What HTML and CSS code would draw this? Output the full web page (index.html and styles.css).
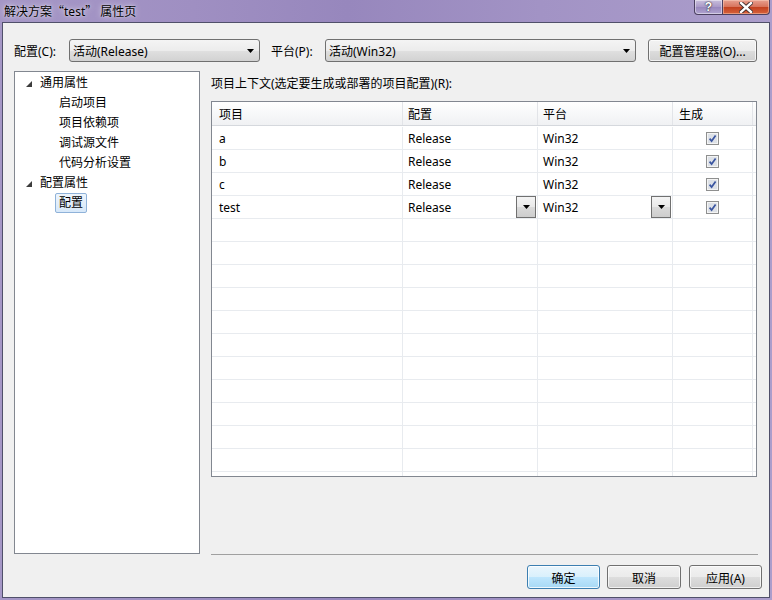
FILE: index.html
```html
<!DOCTYPE html>
<html lang="zh-CN">
<head>
    <meta charset="UTF-8">
    <title>解决方案“test” 属性页</title>
    <link rel="stylesheet" href="styles.css">
</head>
<body>
    <div class="window">
        <div class="titlebar">
            <span class="title">解决方案<span class="cjk-quote">“</span>test<span class="cjk-quote">”</span> 属性页</span>
            <div class="caption-buttons">
                <div class="cap-btn help">?</div>
                <div class="cap-btn close">
                    <svg width="14" height="11" viewBox="0 0 14 11">
                        <path d="M2 1 L12 10 M12 1 L2 10" stroke="#3a2a2a" stroke-width="4.2" stroke-linecap="square"/>
                        <path d="M2 1 L12 10 M12 1 L2 10" stroke="#fff" stroke-width="2.4" stroke-linecap="square"/>
                    </svg>
                </div>
            </div>
        </div>

        <div class="client">
            <div class="toolbar">
                <span class="tb-label">配置(C):</span>
                <div class="combo combo-config">
                    <span>活动(Release)</span>
                    <svg class="arrow" width="7" height="4" viewBox="0 0 7 4"><path d="M0 0 H7 L3.5 4 Z" fill="#000"/></svg>
                </div>
                <span class="tb-label tb-label-platform">平台(P):</span>
                <div class="combo combo-platform">
                    <span>活动(Win32)</span>
                    <svg class="arrow" width="7" height="4" viewBox="0 0 7 4"><path d="M0 0 H7 L3.5 4 Z" fill="#000"/></svg>
                </div>
                <button class="btn btn-manager">配置管理器(O)...</button>
            </div>

            <div class="main">
                <div class="tree">
                    <div class="tree-row top">
                        <span class="toggle"><svg width="7" height="7" viewBox="0 0 7 7"><path d="M6 0 V6 H0 Z" fill="#3c3c3c"/></svg></span>
                        <span class="tree-label">通用属性</span>
                    </div>
                    <div class="tree-row child"><span class="tree-label">启动项目</span></div>
                    <div class="tree-row child"><span class="tree-label">项目依赖项</span></div>
                    <div class="tree-row child"><span class="tree-label">调试源文件</span></div>
                    <div class="tree-row child"><span class="tree-label">代码分析设置</span></div>
                    <div class="tree-row top">
                        <span class="toggle"><svg width="7" height="7" viewBox="0 0 7 7"><path d="M6 0 V6 H0 Z" fill="#3c3c3c"/></svg></span>
                        <span class="tree-label">配置属性</span>
                    </div>
                    <div class="tree-row child"><span class="tree-label selected">配置</span></div>
                </div>

                <div class="pane">
                    <div class="pane-label">项目上下文(选定要生成或部署的项目配置)(R):</div>
                    <div class="grid">
                        <div class="grid-head">
                            <div class="cell c1">项目</div>
                            <div class="cell c2">配置</div>
                            <div class="cell c3">平台</div>
                            <div class="cell c4">生成</div>
                        </div>
                        <div class="grid-body" id="grid-body"></div>
                    </div>
                    <div class="separator"></div>
                </div>
            </div>

            <div class="buttons">
                <button class="btn btn-default">确定</button>
                <button class="btn btn-cancel">取消</button>
                <button class="btn btn-apply">应用(A)</button>
            </div>
        </div>
    </div>

    <script>
        const projects = [
            { name: 'a', config: 'Release', platform: 'Win32' },
            { name: 'b', config: 'Release', platform: 'Win32' },
            { name: 'c', config: 'Release', platform: 'Win32' },
            { name: 'test', config: 'Release', platform: 'Win32', current: true }
        ];
        const emptyRows = 12;

        const checkSvg = '<svg class="check" width="13" height="13" viewBox="0 0 13 13">' +
            '<rect x="0.5" y="0.5" width="12" height="12" fill="#f4f4f4" stroke="#8e8f8f"/>' +
            '<rect x="2" y="2" width="9" height="9" fill="#dde1e7"/>' +
            '<path d="M3.6 6.6 L5.6 9 L9.6 3.4" fill="none" stroke="#3a55a0" stroke-width="1.7"/></svg>';
        const dropBtn = '<span class="cell-drop"><svg width="7" height="4" viewBox="0 0 7 4"><path d="M0 0 H7 L3.5 4 Z" fill="#000"/></svg></span>';

        const body = document.getElementById('grid-body');
        let html = '';
        projects.forEach(p => {
            html += '<div class="grid-row">' +
                '<div class="cell c1"><span class="txt">' + p.name + '</span></div>' +
                '<div class="cell c2"><span class="txt">' + p.config + '</span>' + (p.current ? dropBtn : '') + '</div>' +
                '<div class="cell c3"><span class="txt">' + p.platform + '</span>' + (p.current ? dropBtn : '') + '</div>' +
                '<div class="cell c4">' + checkSvg + '</div>' +
                '</div>';
        });
        for (let i = 0; i < emptyRows; i++) {
            html += '<div class="grid-row"><div class="cell c1"></div><div class="cell c2"></div><div class="cell c3"></div><div class="cell c4"></div></div>';
        }
        body.innerHTML = html;
    </script>
</body>
</html>
```

FILE: styles.css
```css
body {
    margin: 0;
    font-family: "Noto Sans", "Noto Sans CJK SC", sans-serif;
    font-size: 12px;
    color: #000;
}

.window {
    width: 772px;
    height: 600px;
    display: flex;
    flex-direction: column;
    background: linear-gradient(90deg, #a597c6 0%, #9f8fc2 25%, #9787bd 45%, #a293c5 70%, #ab9dcb 100%);
    overflow: hidden;
}

/* title bar */
.titlebar {
    height: 22px;
    display: flex;
    justify-content: space-between;
    align-items: flex-start;
    flex-shrink: 0;
}

.title {
    padding: 3px 0 0 4px;
    line-height: 16px;
    text-shadow: 0 0 6px rgba(255, 255, 255, 0.8), 0 0 2px rgba(255, 255, 255, 0.6);
}

.cjk-quote {
    font-family: "Noto Sans CJK SC", sans-serif;
}

.caption-buttons {
    display: flex;
    margin-right: 2px;
}

.cap-btn {
    height: 15px;
    border: 1px solid #4b4060;
    border-top: none;
    display: flex;
    align-items: center;
    justify-content: center;
    box-sizing: border-box;
}

.help {
    width: 29px;
    border-radius: 0 0 0 4px;
    background: linear-gradient(#c9bfdc, #a999c8 50%, #9887bd 51%, #b0a3cf);
    color: #fff;
    font-family: "Liberation Sans", sans-serif;
    font-weight: bold;
    font-size: 12px;
    line-height: 14px;
    text-shadow: 0 0 1px #222, 0 0 2px #333;
    box-shadow: inset 0 0 0 1px rgba(255, 255, 255, 0.45);
}

.close {
    width: 47px;
    border-left: none;
    border-radius: 0 0 4px 0;
    background: linear-gradient(#e7a090, #d7725a 50%, #c2401f 51%, #d6623c);
    box-shadow: inset 0 0 0 1px rgba(255, 220, 200, 0.45);
}

/* client area */
.client {
    flex: 1;
    margin: 0 2px 2px 2px;
    border: 1px solid #50506a;
    background: #f0f0f0;
    padding: 16px 7px 8px 11px;
    display: flex;
    flex-direction: column;
}

.toolbar {
    display: flex;
    align-items: center;
    height: 23px;
}

.tb-label {
    width: 55px;
    padding-top: 1px;
}

.tb-label-platform {
    margin-left: 11px;
    width: 54px;
}

.combo {
    height: 23px;
    box-sizing: border-box;
    border: 1px solid #707070;
    border-radius: 3px;
    background: linear-gradient(#f4f4f4, #ececec 50%, #e0e0e0 51%, #d2d2d2);
    display: flex;
    align-items: center;
    justify-content: space-between;
    padding: 1px 5px 0 3px;
}

.combo-config {
    width: 191px;
}

.combo-platform {
    width: 311px;
}

.btn {
    font-family: inherit;
    font-size: 12px;
    color: #000;
    height: 24px;
    box-sizing: border-box;
    border: 1px solid #707070;
    border-radius: 3px;
    background: linear-gradient(#f2f2f2, #ebebeb 50%, #dddddd 51%, #cfcfcf);
    box-shadow: inset 0 0 0 1px rgba(255, 255, 255, 0.7);
    padding: 1px 0 0 0;
}

.btn-manager {
    margin-left: 12px;
    width: 109px;
    height: 23px;
}

/* main area */
.main {
    display: flex;
    height: 484px;
    margin-top: 9px;
}

.tree {
    width: 186px;
    height: 483px;
    box-sizing: border-box;
    border: 1px solid #828790;
    background: #fff;
    flex-shrink: 0;
    padding-top: 1px;
}

.tree-row {
    height: 20px;
    display: flex;
    align-items: center;
}

.tree-row.child {
    padding-left: 40px;
}

.toggle {
    width: 10px;
    margin-left: 11px;
    display: flex;
    padding-top: 3px;
}

.tree-label {
    display: inline-block;
    height: 18px;
    line-height: 18px;
    padding: 0 3px;
    border: 1px solid transparent;
    border-radius: 2px;
}

.tree-label.selected {
    border-color: #8fb2d9;
    background: linear-gradient(#eef5fc, #d7e8f9);
}

.pane {
    margin-left: 11px;
    width: 547px;
    display: flex;
    flex-direction: column;
}

.pane-label {
    height: 30px;
    box-sizing: border-box;
    padding-top: 5px;
    line-height: 16px;
}

.grid {
    width: 546px;
    height: 376px;
    box-sizing: border-box;
    border: 1px solid #828790;
    background: #fff;
    overflow: hidden;
}

.grid-head {
    display: flex;
    height: 23px;
    border-bottom: 1px solid #d5d8dd;
    background: linear-gradient(#ffffff, #f7f8f9 50%, #f0f1f3);
}

.grid-head .cell {
    border-right-color: #e2e4e8;
    padding-top: 2px;
}

.grid-head .c4 {
    justify-content: flex-start;
    padding-left: 6px;
}

.grid-body {
    padding-top: 1px;
}

.grid-row {
    display: flex;
    height: 22px;
    border-bottom: 1px solid #e8ebef;
}

.cell {
    box-sizing: border-box;
    border-right: 1px solid #e8ebef;
    line-height: 22px;
    padding-left: 5px;
    display: flex;
    align-items: center;
    justify-content: space-between;
}

.txt {
    padding-top: 1px;
}

.c1 {
    width: 191px;
    padding-left: 7px;
}

.c2,
.c3 {
    width: 135px;
}

.c4 {
    width: 80px;
    justify-content: center;
    padding-left: 0;
}

.cell-drop {
    width: 20px;
    height: 22px;
    margin-right: 1px;
    box-sizing: border-box;
    border: 1px solid #707070;
    background: linear-gradient(#f4f4f4, #e9e9e9 50%, #dadada 51%, #cdcdcd);
    display: flex;
    align-items: center;
    justify-content: center;
}

.check {
    display: block;
}

.separator {
    margin-top: auto;
    height: 1px;
    background: #a0a0a0;
}

/* dialog buttons */
.buttons {
    display: flex;
    justify-content: flex-end;
    margin-top: 10px;
}

.buttons .btn {
    width: 73px;
}

.buttons .btn-cancel {
    width: 74px;
    margin: 0 8px 0 7px;
}

.btn-default {
    border-color: #3c7fb1;
    background: linear-gradient(#eaf6fd, #d9f0fc 50%, #bee6fd 51%, #a7d9f5);
    box-shadow: inset 0 0 0 1px rgba(255, 255, 255, 0.8);
}
```
